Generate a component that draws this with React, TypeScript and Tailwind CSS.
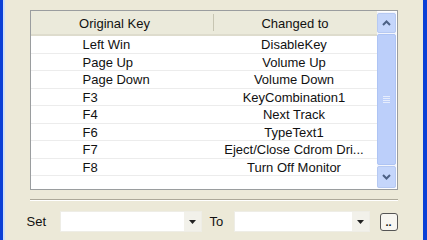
import React from "react";

const rows: [string, string][] = [
  ["Left Win", "DisableKey"],
  ["Page Up", "Volume Up"],
  ["Page Down", "Volume Down"],
  ["F3", "KeyCombination1"],
  ["F4", "Next Track"],
  ["F6", "TypeText1"],
  ["F7", "Eject/Close Cdrom Dri..."],
  ["F8", "Turn Off Monitor"],
];

function Arrow() {
  return (
    <svg width="7" height="4" viewBox="0 0 7 4">
      <path d="M0 0h7L3.5 4z" fill="#222" />
    </svg>
  );
}

function Combo({ w }: { w: string }) {
  return (
    <div className={`${w} h-[21px] bg-white flex items-stretch border border-[#eeede6]`}>
      <div className="flex-1" />
      <div className="w-[17px] bg-[#f2f1ea] flex items-center justify-center">
        <Arrow />
      </div>
    </div>
  );
}

export default function App() {
  return (
    <div
      className="w-[427px] h-[240px] bg-[#ece9d8] flex overflow-hidden text-[13px] text-[#111]"
      style={{ fontFamily: '"Liberation Sans", Arial, sans-serif' }}
    >
      <div className="w-[3px] bg-[#0a3fd6]" />
      <div className="w-[2px] bg-[#cfe0f7]" />
      <div className="flex-1 flex flex-col pl-[25px] pr-[24px] pt-[10px]">
        {/* list box */}
        <div className="w-[368px] h-[180px] border border-[#9a9d9f] bg-white flex">
          <div className="flex-1 flex flex-col">
            <div className="h-[25px] flex bg-[#ebeadb] border-b-[2px] border-[#dedccd]">
              <div className="w-[182px] flex items-center justify-center pt-[3px] pr-[14px]">Original Key</div>
              <div className="w-[1px] my-[3px] bg-[#c7c5b2]" />
              <div className="flex-1 flex items-center justify-center pt-[3px]">Changed to</div>
            </div>
            {rows.map(([a, b]) => (
              <div key={a} className="h-[17.5px] flex items-center border-b border-[#ececec] leading-none pt-[1px]">
                <div className="w-[183px] pl-[52px]">{a}</div>
                <div className="flex-1 text-center pr-[2px]">{b}</div>
              </div>
            ))}
          </div>
          {/* scrollbar */}
          <div className="w-[19px] mr-[1px] my-[1px] flex flex-col bg-[#f3f5fc]">
            <div className="h-[20px] mt-[1px] rounded-[2px] bg-[#c5d6fb] border border-[#b6c9f2] flex items-center justify-center">
              <svg width="9" height="6" viewBox="0 0 9 6">
                <path d="M1 5l3.5-3.5L8 5" stroke="#4d6185" strokeWidth="2" fill="none" />
              </svg>
            </div>
            <div className="flex-1 my-[1px] rounded-[2px] bg-[#bccffa] border border-[#aec4f4] flex flex-col items-center justify-center gap-[1px]">
              <div className="w-[7px] h-[1px] bg-[#e6edfd]" />
              <div className="w-[7px] h-[1px] bg-[#e6edfd]" />
              <div className="w-[7px] h-[1px] bg-[#e6edfd]" />
              <div className="w-[7px] h-[1px] bg-[#e6edfd]" />
            </div>
            <div className="h-[22px] rounded-[2px] bg-[#c5d6fb] border border-[#b6c9f2] flex items-center justify-center">
              <svg width="9" height="6" viewBox="0 0 9 6">
                <path d="M1 1l3.5 3.5L8 1" stroke="#4d6185" strokeWidth="2" fill="none" />
              </svg>
            </div>
          </div>
        </div>
        {/* separator */}
        <div className="w-[368px] mt-[9px] h-[2px] border-t border-[#aca899] border-b border-b-white" />
        {/* bottom controls */}
        <div className="flex items-center mt-[10px] w-[372px] -ml-[3px]">
          <span className="w-[33px]">Set</span>
          <Combo w="w-[142px]" />
          <span className="ml-[8px] w-[24px]">To</span>
          <Combo w="w-[136px]" />
          <div className="ml-[10px] w-[18px] h-[18px] rounded-[3px] border border-[#555] bg-[#f7f6f1] flex items-end justify-center pb-[2px] leading-none text-[11px] font-bold">
            ..
          </div>
        </div>
      </div>
      <div className="w-[5px] bg-[#0a3fd6]" />
    </div>
  );
}
